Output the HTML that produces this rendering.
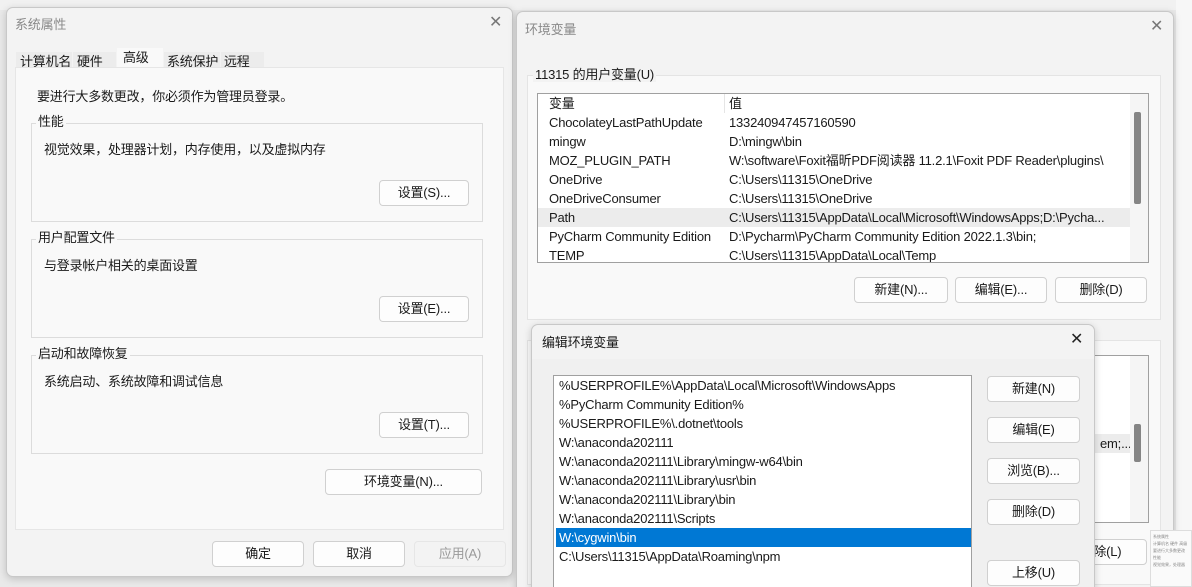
<!DOCTYPE html>
<html><head><meta charset="utf-8"><style>
*{box-sizing:border-box;margin:0;padding:0}
html,body{width:1192px;height:587px;overflow:hidden}
body{background:#e9e9e9;position:relative;font-family:"Liberation Sans","Noto Sans CJK SC",sans-serif;font-size:13px;color:#1a1a1a;letter-spacing:-0.2px}
.a{position:absolute}
.dlg{position:absolute;background:#f0f0f0;border:1px solid #c8c8c8;border-radius:7px;box-shadow:0 2px 8px rgba(0,0,0,.18)}
.btn{position:absolute;background:#fdfdfd;border:1px solid #d0d0d0;border-radius:4px;text-align:center;line-height:24px;height:26px}
.grp{position:absolute;border:1px solid #dcdcdc}
.lg{position:absolute;background:#f9f9f9;padding:0 2px;line-height:14px}
.row{position:absolute;height:19px;line-height:19px;white-space:nowrap}
.x{position:absolute;font-size:16px;color:#777;line-height:16px;font-weight:300}
.tab{position:absolute;line-height:19px;white-space:nowrap}
</style></head><body>
<div class="a" style="left:0;top:0;width:1192px;height:10px;background:#f1f1f1"></div>
<div class="a" style="left:1176px;top:0;width:16px;height:587px;background:#f7f7f7"></div>

<!-- left dialog -->
<div class="dlg" style="left:6px;top:7px;width:507px;height:570px;background:#f3f3f3">
 <div class="a" style="left:8px;top:6px;color:#8a8a8a">系统属性</div>
 <div class="x" style="left:482px;top:7px">✕</div>
 <div class="a" style="left:9px;top:40px;width:488px;height:23px;">
  <div class="tab" style="left:0;top:4px;width:56px;height:20px;background:#ececec;padding-left:4px">计算机名</div>
  <div class="tab" style="left:57px;top:4px;width:43px;height:20px;background:#ececec;padding-left:4px">硬件</div>
  <div class="tab" style="left:101px;top:0;width:46px;height:24px;background:#f9f9f9;padding-left:6px">高级</div>
  <div class="tab" style="left:148px;top:4px;width:56px;height:20px;background:#ececec;padding-left:3px">系统保护</div>
  <div class="tab" style="left:205px;top:4px;width:43px;height:20px;background:#ececec;padding-left:3px">远程</div>
 </div>
 <div class="a" style="left:8px;top:59px;width:489px;height:463px;background:#f9f9f9;border:1px solid #e6e6e6">
  <div class="a" style="left:21px;top:18px">要进行大多数更改，你必须作为管理员登录。</div>
  <div class="grp" style="left:15px;top:55px;width:452px;height:99px"></div>
  <div class="lg" style="left:20px;top:47px">性能</div>
  <div class="a" style="left:28px;top:71px">视觉效果，处理器计划，内存使用，以及虚拟内存</div>
  <div class="btn" style="left:363px;top:112px;width:90px">设置(S)...</div>
  <div class="grp" style="left:15px;top:171px;width:452px;height:99px"></div>
  <div class="lg" style="left:20px;top:163px">用户配置文件</div>
  <div class="a" style="left:28px;top:187px">与登录帐户相关的桌面设置</div>
  <div class="btn" style="left:363px;top:228px;width:90px">设置(E)...</div>
  <div class="grp" style="left:15px;top:287px;width:452px;height:99px"></div>
  <div class="lg" style="left:20px;top:279px">启动和故障恢复</div>
  <div class="a" style="left:28px;top:303px">系统启动、系统故障和调试信息</div>
  <div class="btn" style="left:363px;top:344px;width:90px">设置(T)...</div>
  <div class="btn" style="left:309px;top:401px;width:157px">环境变量(N)...</div>
 </div>
 <div class="btn" style="left:205px;top:533px;width:92px">确定</div>
 <div class="btn" style="left:306px;top:533px;width:92px">取消</div>
 <div class="btn" style="left:407px;top:533px;width:92px;background:#f3f3f3;border-color:#e6e6e6;color:#9a9a9a">应用(A)</div>
</div>

<!-- env vars dialog -->
<div class="dlg" style="left:516px;top:11px;width:658px;height:590px;background:#f3f3f3">
 <div class="a" style="left:8px;top:7px;color:#8a8a8a">环境变量</div>
 <div class="x" style="left:633px;top:7px">✕</div>
 <div class="grp" style="left:10px;top:63px;width:634px;height:245px;background:#f9f9f9;border-color:#e4e4e4"></div>
 <div class="lg" style="left:16px;top:56px;background:#f3f3f3">11315 的用户变量(U)</div>
 <div class="a" style="left:20px;top:81px;width:612px;height:170px;background:#fff;border:1px solid #a0a0a0;overflow:hidden">
  <div class="a" style="left:186px;top:0;width:1px;height:19px;background:#e5e5e5"></div>
  <div class="a" style="left:0;top:114px;width:592px;height:19px;background:#ececec"></div>
  <div class="a" style="left:592px;top:0;width:18px;height:170px;background:#f5f5f5"></div>
  <div class="a" style="left:596px;top:18px;width:7px;height:92px;background:#858585;border-radius:2px"></div>
  <div class="row" style="left:11px;top:0">变量</div><div class="row" style="left:191px;top:0">值</div>
  <div class="row" style="left:11px;top:19px">ChocolateyLastPathUpdate</div><div class="row" style="left:191px;top:19px">133240947457160590</div>
  <div class="row" style="left:11px;top:38px">mingw</div><div class="row" style="left:191px;top:38px">D:\mingw\bin</div>
  <div class="row" style="left:11px;top:57px">MOZ_PLUGIN_PATH</div><div class="row" style="left:191px;top:57px">W:\software\Foxit福昕PDF阅读器 11.2.1\Foxit PDF Reader\plugins\</div>
  <div class="row" style="left:11px;top:76px">OneDrive</div><div class="row" style="left:191px;top:76px">C:\Users\11315\OneDrive</div>
  <div class="row" style="left:11px;top:95px">OneDriveConsumer</div><div class="row" style="left:191px;top:95px">C:\Users\11315\OneDrive</div>
  <div class="row" style="left:11px;top:114px">Path</div><div class="row" style="left:191px;top:114px">C:\Users\11315\AppData\Local\Microsoft\WindowsApps;D:\Pycha...</div>
  <div class="row" style="left:11px;top:133px">PyCharm Community Edition</div><div class="row" style="left:191px;top:133px">D:\Pycharm\PyCharm Community Edition 2022.1.3\bin;</div>
  <div class="row" style="left:11px;top:152px">TEMP</div><div class="row" style="left:191px;top:152px">C:\Users\11315\AppData\Local\Temp</div>
 </div>
 <div class="btn" style="left:337px;top:265px;width:94px">新建(N)...</div>
 <div class="btn" style="left:438px;top:265px;width:92px">编辑(E)...</div>
 <div class="btn" style="left:538px;top:265px;width:92px">删除(D)</div>
 <div class="grp" style="left:10px;top:328px;width:634px;height:245px;background:#f9f9f9;border-color:#e4e4e4"></div>
 <div class="a" style="left:20px;top:343px;width:612px;height:168px;background:#fff;border:1px solid #a0a0a0;overflow:hidden">
  <div class="a" style="left:0;top:78px;width:592px;height:19px;background:#ececec"></div>
  <div class="row" style="left:562px;top:78px">em;...</div>
  <div class="a" style="left:592px;top:0;width:18px;height:168px;background:#f5f5f5"></div>
  <div class="a" style="left:596px;top:68px;width:7px;height:38px;background:#858585;border-radius:2px"></div>
 </div>
 <div class="btn" style="left:538px;top:527px;width:92px">删除(L)</div>
</div>

<!-- tiny thumbnail -->
<div class="a" style="left:1150px;top:530px;width:42px;height:57px;background:#fafafa;border:1px solid #ddd;font-size:4px;color:#888;line-height:7px;padding:2px;overflow:hidden;letter-spacing:0">系统属性<br>计算机名 硬件 高级<br>要进行大多数更改<br>性能<br>视觉效果，处理器</div>

<!-- edit dialog -->
<div class="dlg" style="left:531px;top:324px;width:564px;height:280px;background:#f0f0f0">
 <div class="a" style="left:0;top:0;width:562px;height:34px;background:#f3f3f3;border-radius:7px 7px 0 0"></div>
 <div class="a" style="left:10px;top:7px;color:#1a1a1a">编辑环境变量</div>
 <div class="x" style="left:538px;top:7px;color:#222">✕</div>
 <div class="a" style="left:21px;top:50px;width:419px;height:230px;background:#fff;border:1px solid #a0a0a0;overflow:hidden">
  <div class="a" style="left:2px;top:152px;width:415px;height:19px;background:#0078d4"></div>
  <div class="row" style="left:5px;top:0">%USERPROFILE%\AppData\Local\Microsoft\WindowsApps</div>
  <div class="row" style="left:5px;top:19px">%PyCharm Community Edition%</div>
  <div class="row" style="left:5px;top:38px">%USERPROFILE%\.dotnet\tools</div>
  <div class="row" style="left:5px;top:57px">W:\anaconda202111</div>
  <div class="row" style="left:5px;top:76px">W:\anaconda202111\Library\mingw-w64\bin</div>
  <div class="row" style="left:5px;top:95px">W:\anaconda202111\Library\usr\bin</div>
  <div class="row" style="left:5px;top:114px">W:\anaconda202111\Library\bin</div>
  <div class="row" style="left:5px;top:133px">W:\anaconda202111\Scripts</div>
  <div class="row" style="left:5px;top:152px;color:#fff">W:\cygwin\bin</div>
  <div class="row" style="left:5px;top:171px">C:\Users\11315\AppData\Roaming\npm</div>
 </div>
 <div class="btn" style="left:455px;top:51px;width:93px">新建(N)</div>
 <div class="btn" style="left:455px;top:92px;width:93px">编辑(E)</div>
 <div class="btn" style="left:455px;top:133px;width:93px">浏览(B)...</div>
 <div class="btn" style="left:455px;top:174px;width:93px">删除(D)</div>
 <div class="btn" style="left:455px;top:235px;width:93px">上移(U)</div>
</div>
</body></html>
